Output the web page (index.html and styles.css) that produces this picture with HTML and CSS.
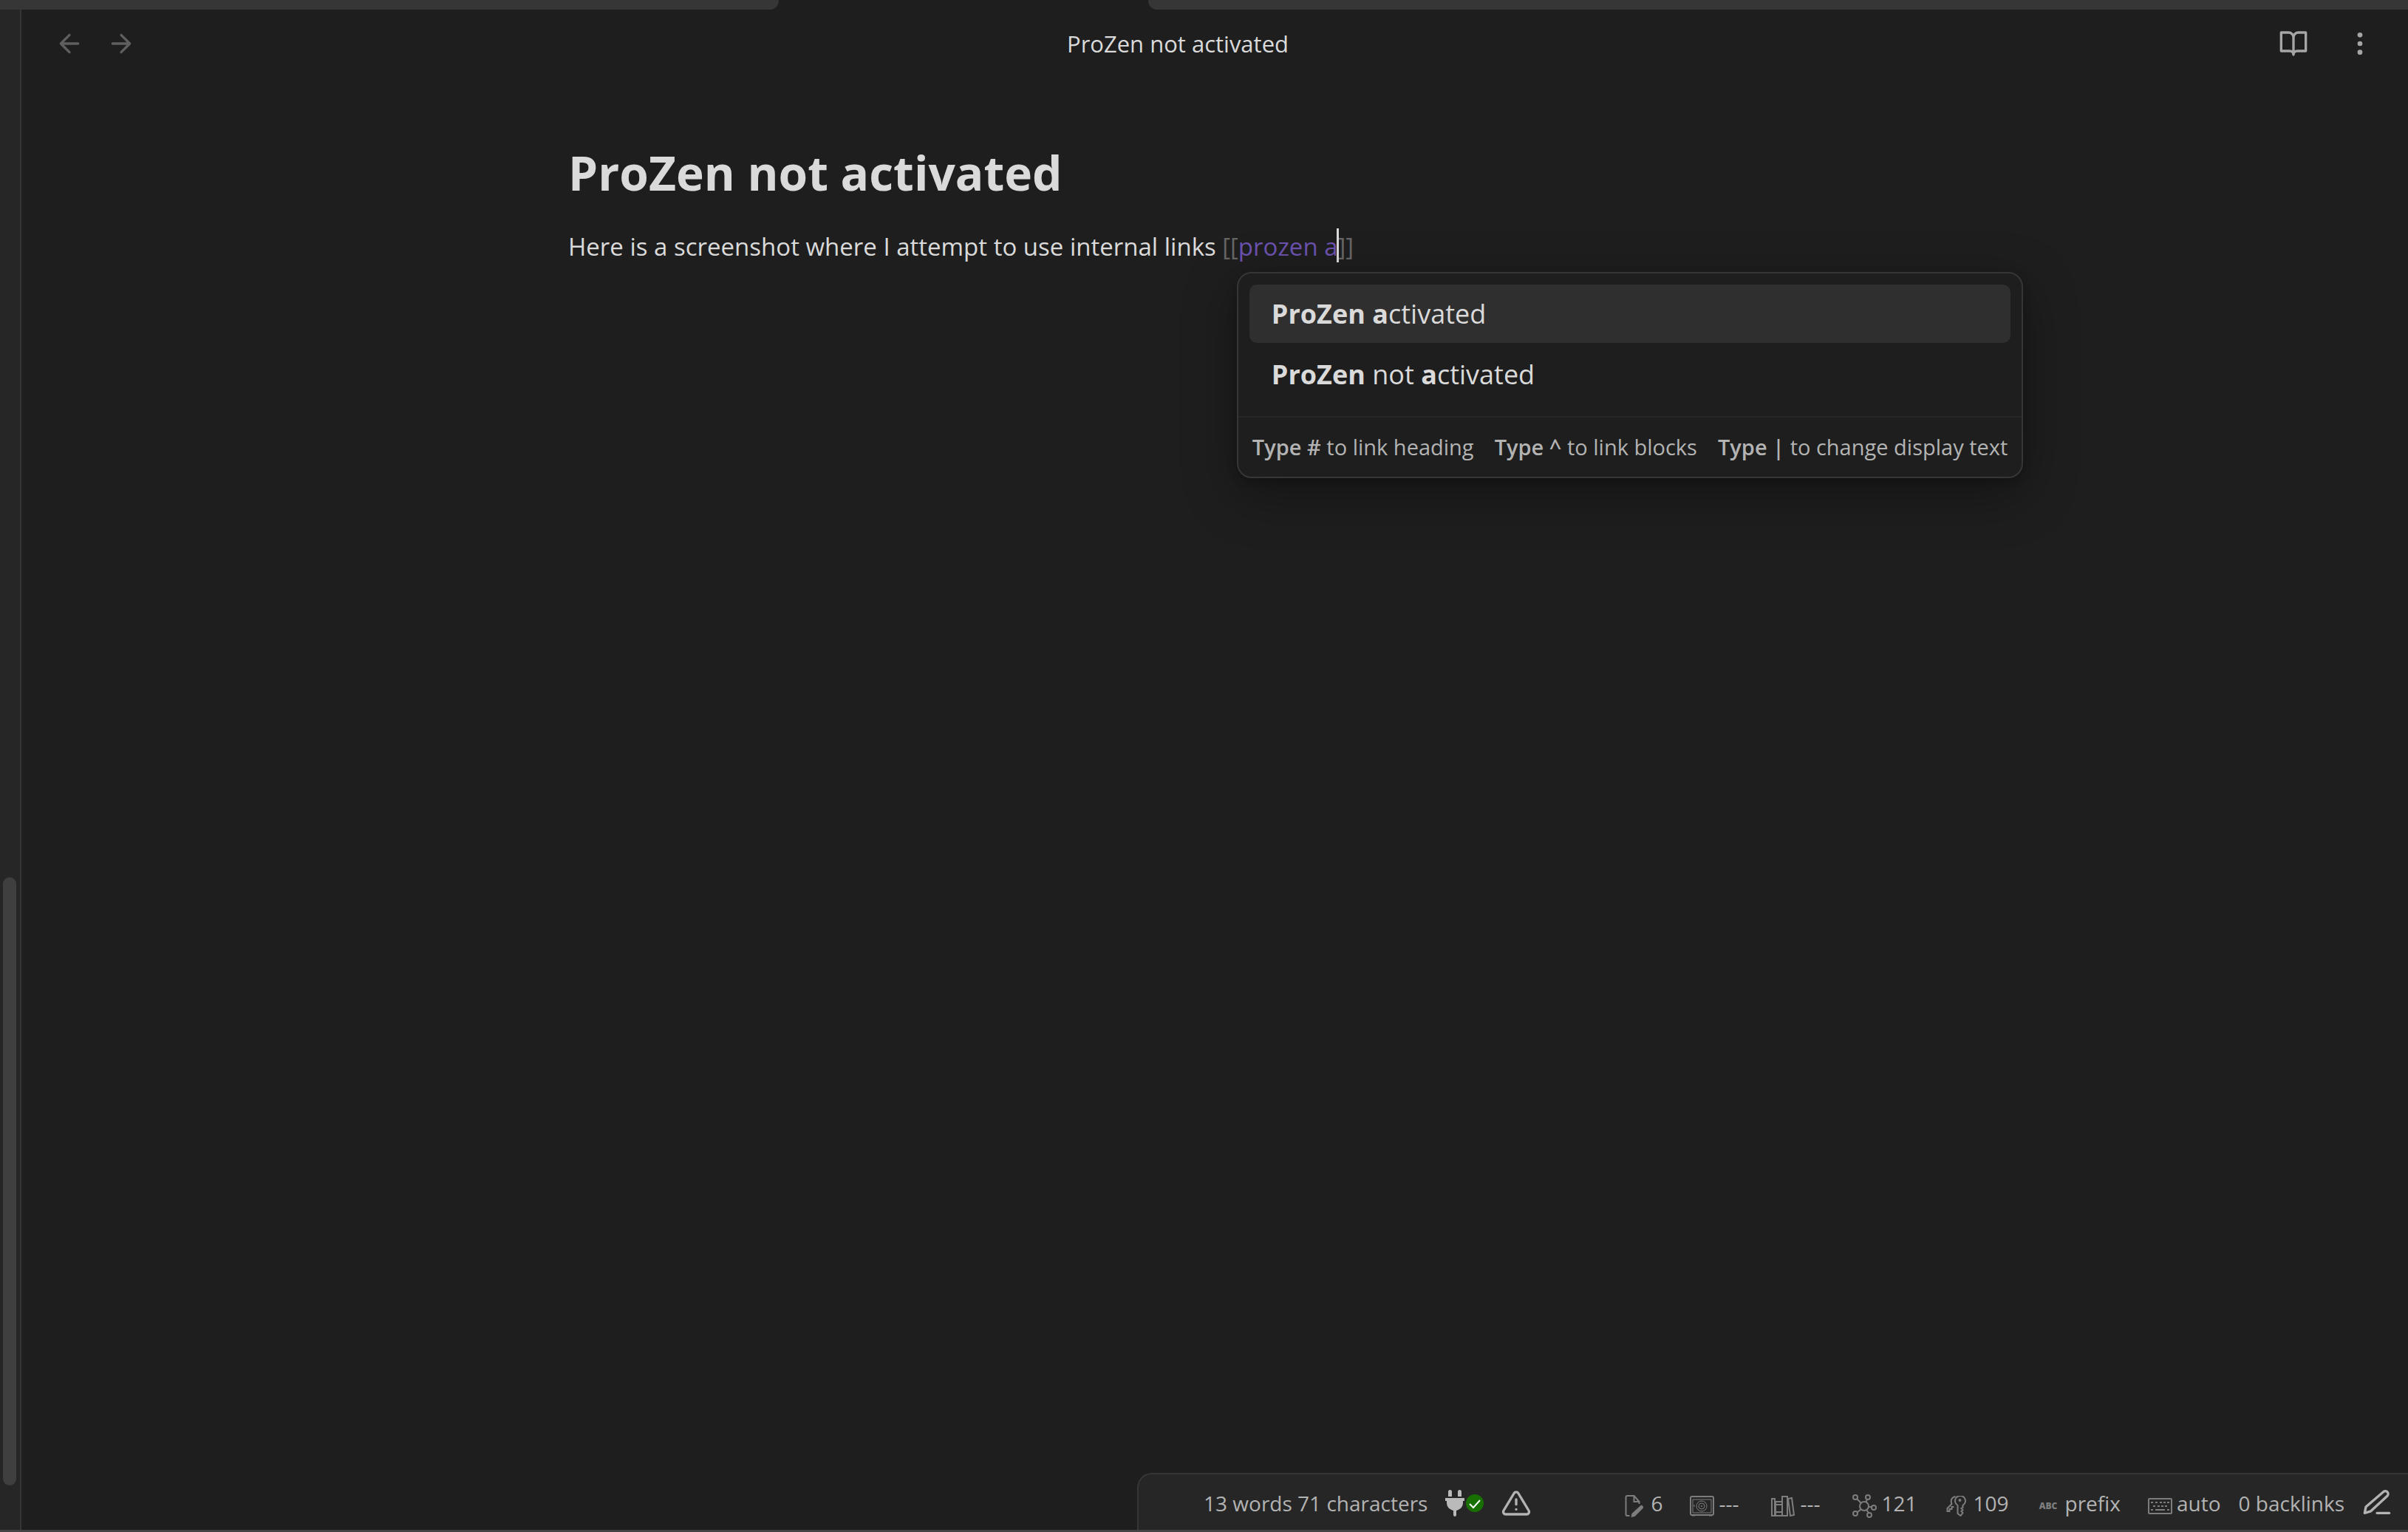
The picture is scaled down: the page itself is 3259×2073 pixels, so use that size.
FILE: index.html
```html
<!DOCTYPE html>
<html lang="en">
<head>
  <meta charset="UTF-8" />
  <meta name="viewport" content="width=device-width, initial-scale=1.0"/>
  <title>ProZen not activated</title>
  <link rel="stylesheet" href="styles.css">
</head>
<body>

  <div class="tab-strip">
    <div class="tabs-before"></div>
    <div class="tab-active"></div>
    <div class="tabs-after"></div>
  </div>

  <div class="workspace">
    <aside class="sidebar">
      <div class="scroll-thumb"></div>
    </aside>

    <main class="pane">
      <header class="view-header">
        <nav class="nav-buttons">
          <button class="icon-button dim" aria-label="Back">
            <svg class="icon" viewBox="0 0 24 24"><path d="M19 12H5M12 19l-7-7 7-7"/></svg>
          </button>
          <button class="icon-button dim" aria-label="Forward">
            <svg class="icon" viewBox="0 0 24 24"><path d="M5 12h14M12 5l7 7-7 7"/></svg>
          </button>
        </nav>
        <div class="view-title">ProZen not activated</div>
        <div class="view-actions">
          <button class="icon-button" aria-label="Reading view">
            <svg class="icon" viewBox="0 0 24 24"><path d="M2 3h6a4 4 0 0 1 4 4v14a3 3 0 0 0-3-3H2zM22 3h-6a4 4 0 0 0-4 4v14a3 3 0 0 1 3-3h7z"/></svg>
          </button>
          <button class="icon-button" aria-label="More options">
            <svg class="icon dots" viewBox="0 0 24 24"><circle cx="12" cy="5" r="2"/><circle cx="12" cy="12" r="2"/><circle cx="12" cy="19" r="2"/></svg>
          </button>
        </div>
      </header>

      <article class="editor">
        <h1>ProZen not activated</h1>
        <p>Here is a screenshot where I attempt to use internal links <span class="bracket">[[</span><span class="link-edit"><a href="#">prozen a</a><span class="caret"></span><span class="suggestions">
            <span class="suggestion-list">
              <button class="suggestion selected"><b>ProZen</b> <b>a</b>ctivated</button>
              <button class="suggestion"><b>ProZen</b> not <b>a</b>ctivated</button>
            </span>
            <span class="hints">
              <span><b>Type #</b> to link heading</span>
              <span><b>Type ^</b> to link blocks</span>
              <span><b>Type |</b> to change display text</span>
            </span>
          </span></span><span class="bracket">]]</span></p>
      </article>

      <footer class="status-bar">
        <div class="status-item">13 words 71 characters</div>
        <div class="status-item plug">
          <svg class="plug-icon" viewBox="0 0 26 36"><path d="M4 9V2.500a2.500 2.500 0 0 1 5 0V9zM17 9V2.500a2.500 2.500 0 0 1 5 0V9zM0 11h26v4h-2v2c0 6-3 9-9 11v6a2 2 0 0 1-4 0v-6C5 26 2 23 2 17v-2H0z"/></svg>
          <svg class="check-icon" viewBox="0 0 24 24"><circle cx="12" cy="12" r="12"/><path d="M5 13l5 5 9-10"/></svg>
        </div>
        <div class="status-item warning">
          <svg class="icon" viewBox="0 0 24 24"><path d="M10.300 3.900 1.800 18a2 2 0 0 0 1.700 3h17a2 2 0 0 0 1.700-3L13.700 3.900a2 2 0 0 0-3.400 0zM12 9v4M12 17h.01"/></svg>
        </div>
        <div class="status-item metric">
          <svg class="line-icon file" viewBox="0 0 24 30"><path d="M6 28H3a2 2 0 0 1-2-2V3a2 2 0 0 1 2-2h9l7 8v3M12 1v8h7"/><path class="solid" d="M20 15a2.500 2.500 0 0 1 4 3L13 29l-5 1 1-5z"/></svg>
          6
        </div>
        <div class="status-item metric">
          <svg class="line-icon" viewBox="0 0 33 28"><rect x="1" y="1" width="31" height="25" rx="2"/><path class="thin" d="M4 5h25v18H4zM3 26v1h4v-1M26 26v1h4v-1M6 12v3"/><circle class="thin" cx="16" cy="14" r="7"/><circle class="thin" cx="16" cy="14" r="4"/><circle class="solid" cx="16" cy="14" r="1"/></svg>
          <span class="unset">---</span>
        </div>
        <div class="status-item metric">
          <svg class="line-icon" viewBox="0 0 33 28"><path d="M1 4h4v23H1zM6 8h9v19H6zM6 12h9M6 22h9M15 1h7v26h-7zM23 4l5-1 3 23-5 1z"/></svg>
          <span class="unset">---</span>
        </div>
        <div class="status-item metric">
          <svg class="line-icon" viewBox="0 0 33 32"><circle cx="16" cy="16" r="6"/><circle cx="4" cy="4" r="3"/><circle cx="21" cy="4" r="3"/><circle cx="29" cy="18" r="3"/><circle cx="4" cy="26" r="3"/><circle cx="23" cy="28" r="3"/><path d="M6 6l6 6M20 7l-2 4M22 17h4M7 24l5-4M19 21l3 4"/></svg>
          121
        </div>
        <div class="status-item metric">
          <svg class="line-icon keys" viewBox="0 0 26 28"><path d="M15 13a7 7 0 1 1 7 0v3l-2 1 2 2-2 2 2 2-3 4-4-3z"/><path d="M12 1C7 2 5 6 7 11l-6 6v4h3v-3h3v-3h3"/><circle class="solid" cx="18" cy="6" r="2"/></svg>
          109
        </div>
        <div class="status-item metric"><span class="abc">ABC</span> prefix</div>
        <div class="status-item metric">
          <svg class="line-icon" viewBox="0 0 33 22"><rect x="1" y="1" width="31" height="20" rx="1"/><path d="M4 6h3M10 6h3M16 6h3M21 6h3M26 6h3M7 11h3M13 11h3M18 11h3M23 11h3M4 16h3M10 16h13M26 16h3"/></svg>
          auto
        </div>
        <div class="status-item">0 backlinks</div>
        <button class="status-item" aria-label="Editing mode">
          <svg class="icon" viewBox="0 0 24 24"><path d="M12 20h10M17 3a2.100 2.100 0 0 1 3.500 3L7 18.500 2 20l1-5z"/></svg>
        </button>
      </footer>
    </main>
  </div>

  <div class="bottom-edge"></div>

</body>
</html>
```
FILE: styles.css
```css
body {
  margin: 0;
  height: 100vh;
  display: flex;
  flex-direction: column;
  overflow: hidden;
  background-color: #1e1e1e;
  color: #dadada;
  font-family: "Open Sans", "Noto Sans", sans-serif;
  font-size: 31px;
}

button {
  border: 0;
  padding: 0;
  background: none;
  color: inherit;
  font: inherit;
}

/* tabs */
.tab-strip {
  display: flex;
  height: 13px;
}

.tabs-before,
.tabs-after {
  background-color: #363636;
}

.tabs-before {
  width: 1054px;
  border-bottom-right-radius: 12px;
}

.tab-active {
  width: 500px;
}

.tabs-after {
  flex: 1;
  border-bottom-left-radius: 12px;
}

/* layout */
.workspace {
  flex: 1;
  min-height: 0;
  display: flex;
}

.sidebar {
  display: flex;
  flex-direction: column;
  justify-content: flex-end;
  width: 23px;
  padding: 0 0 60px 4px;
  border-right: 2px solid #363636;
  background-color: #262626;
}

.scroll-thumb {
  width: 18px;
  height: 823px;
  border-radius: 9px;
  background-color: #3f3f3f;
}

.pane {
  flex: 1;
  display: flex;
  flex-direction: column;
}

/* header */
.view-header {
  display: flex;
  align-items: center;
  height: 92px;
}

.nav-buttons {
  display: flex;
  gap: 24px;
  width: 118px;
  padding-left: 42px;
}

.icon-button {
  display: flex;
  justify-content: center;
  width: 46px;
  color: #a6a6a6;
}

.dim {
  color: #5f5f5f;
}

.icon {
  width: 40px;
  height: 40px;
  fill: none;
  stroke: currentColor;
  stroke-width: 2;
  stroke-linecap: round;
  stroke-linejoin: round;
}

.dots {
  fill: currentColor;
  stroke: none;
}

.view-title {
  flex: 1;
  text-align: center;
}

.view-actions {
  display: flex;
  justify-content: flex-end;
  gap: 44px;
  width: 218px;
  padding-right: 42px;
}

/* note */
.editor {
  width: 100%;
  max-width: 1750px;
  margin: 0 auto;
  padding-top: 76px;
}

h1 {
  margin: 0;
  font-size: 64px;
  font-weight: 700;
  line-height: 106px;
}

p {
  margin: 20px 0 0;
  font-size: 33px;
  line-height: 54px;
}

.bracket {
  color: #666;
}

.link-edit {
  position: relative;
}

.link-edit a {
  color: #6b52ae;
  text-decoration: none;
}

.caret {
  position: absolute;
  top: -2px;
  right: -1px;
  width: 3px;
  height: 46px;
  background-color: #dadada;
}

/* link suggestions */
.suggestions {
  position: absolute;
  top: 57px;
  left: -2px;
  border: 2px solid #363636;
  border-radius: 20px;
  background-color: #1e1e1e;
  box-shadow: 0 4px 12px rgba(0, 0, 0, 0.2), 0 20px 70px rgba(0, 0, 0, 0.35);
  white-space: nowrap;
}

.suggestion-list {
  display: flex;
  flex-direction: column;
  gap: 3px;
  padding: 15px 15px 17px;
}

.suggestion {
  height: 79px;
  padding: 0 30px;
  border-radius: 10px;
  font-size: 36px;
  text-align: left;
}

.selected {
  background-color: #2f2f2f;
}

.hints {
  display: flex;
  gap: 28px;
  padding: 12px 19px;
  border-top: 2px solid #262626;
  color: #b3b3b3;
  font-size: 29px;
  line-height: 56px;
}

.hints b {
  font-weight: 600;
}

/* status bar */
.status-bar {
  display: flex;
  align-items: center;
  align-self: flex-end;
  gap: 24px;
  height: 73px;
  margin-top: auto;
  padding: 2px 22px 0 88px;
  border: 2px solid #363636;
  border-width: 2px 0 0 2px;
  border-top-left-radius: 20px;
  background-color: #262626;
  color: #b3b3b3;
  font-size: 28px;
}

.status-item {
  display: flex;
  align-items: center;
  gap: 6px;
}

.metric {
  padding-left: 13px;
}

.plug {
  gap: 2px;
}

.plug-icon {
  width: 26px;
  fill: #bababa;
}

.check-icon {
  width: 24px;
  fill: #177000;
}

.check-icon path {
  fill: none;
  stroke: #fff;
  stroke-width: 2;
}

.warning {
  margin-right: 86px;
}

.line-icon {
  width: 33px;
  margin-top: 8px;
  fill: none;
  stroke: #7d7d7d;
  stroke-width: 2;
}

.file {
  height: 30px;
}

.keys {
  height: 28px;
}

.solid {
  fill: #7d7d7d;
  stroke: none;
}

.thin {
  stroke-width: 1;
}

.unset {
  min-width: 34px;
}

.abc {
  width: 33px;
  margin-top: 8px;
  color: #7d7d7d;
  font-size: 12px;
  font-weight: 800;
  text-align: center;
}

.bottom-edge {
  height: 3px;
  background-color: #444;
}
```
